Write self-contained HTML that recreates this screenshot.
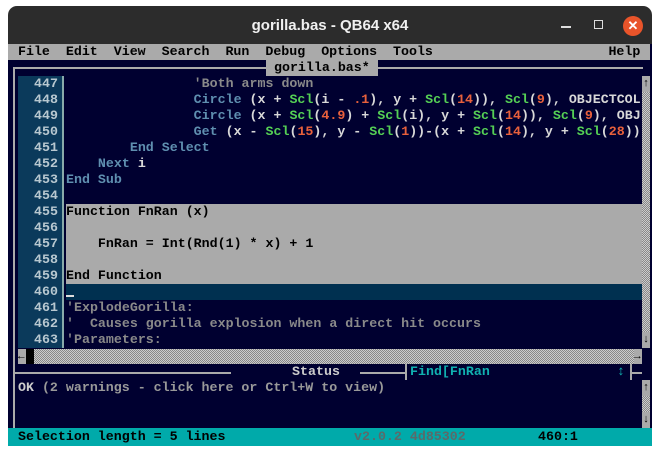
<!DOCTYPE html>
<html><head><meta charset="utf-8"><style>
*{margin:0;padding:0;box-sizing:border-box}
body{width:660px;height:455px;background:#fff;position:relative;overflow:hidden;font-family:"Liberation Mono",monospace;font-size:13.3px;line-height:16px;font-weight:bold}
.a{position:absolute;white-space:pre;overflow:hidden}
.kw{color:#5f8fb0}.id{color:#d8d8d8}.g{color:#55d055}.n{color:#e8603c}.cm{color:#8a8a8a}
</style></head><body>
<div class="a" style="left:8px;top:6px;width:644px;height:40px;background:#2c2c2c;border-radius:9px 9px 0 0"></div>
<div class="a" style="left:8px;top:17px;width:644px;text-align:center;font:bold 15px 'Liberation Sans',sans-serif;color:#f0f0f0">gorilla.bas - QB64 x64</div>
<div class="a" style="left:561px;top:26px;width:10px;height:2px;background:#ddd"></div>
<div class="a" style="left:594px;top:20px;width:9px;height:9px;border:1.5px solid #ddd"></div>
<div class="a" style="left:623px;top:16px;width:20px;height:20px;border-radius:50%;background:#e9542a;color:#fff;font:bold 13px 'Liberation Sans',sans-serif;text-align:center;line-height:20px">✕</div>
<div class="a" style="left:8px;top:44px;width:644px;height:402px;background:#000030"></div>
<div class="a" style="left:10px;top:44px;width:642px;height:16px;background:#aaa;color:#000;margin-left:-2px;padding-left:2px"> File  Edit  View  Search  Run  Debug  Options  Tools                      Help</div>
<!-- frame -->
<div class="a" style="left:13px;top:67px;width:630px;height:2px;background:#aaa"></div>
<div class="a" style="left:13px;top:67px;width:2px;height:300px;background:#aaa"></div>
<div class="a" style="left:266px;top:60px;width:112px;height:16px;background:#aaa;color:#000"> gorilla.bas*</div>
<div class="a" style="left:18px;top:76px;width:44px;height:272px;background:#0b3a5b"></div>
<div class="a" style="left:62px;top:76px;width:2px;height:272px;background:#8aa"></div>
<div class="a" style="left:66px;top:204px;width:576px;height:80px;background:#aaa"></div>
<div class="a" style="left:66px;top:284px;width:576px;height:16px;background:#003050"></div>
<div class="a" style="left:66px;top:295px;width:8px;height:2px;background:#ddd"></div>
<div class="a" style="left:18px;top:76px;width:40px;text-align:right;color:#b8c8d0">447
448
449
450
451
452
453
454
455
456
457
458
459
460
461
462
463</div>
<div class="a" style="left:66px;top:76px;width:576px;height:272px"><span class="cm">                'Both arms down</span>
<span class="kw">                Circle</span><span class="id"> (x + </span><span class="g">Scl</span><span class="id">(i - </span><span class="n">.1</span><span class="id">), y + </span><span class="g">Scl</span><span class="id">(</span><span class="n">14</span><span class="id">)), </span><span class="g">Scl</span><span class="id">(</span><span class="n">9</span><span class="id">), OBJECTCOL</span>
<span class="kw">                Circle</span><span class="id"> (x + </span><span class="g">Scl</span><span class="id">(</span><span class="n">4.9</span><span class="id">) + </span><span class="g">Scl</span><span class="id">(i), y + </span><span class="g">Scl</span><span class="id">(</span><span class="n">14</span><span class="id">)), </span><span class="g">Scl</span><span class="id">(</span><span class="n">9</span><span class="id">), OBJ</span>
<span class="kw">                Get</span><span class="id"> (x - </span><span class="g">Scl</span><span class="id">(</span><span class="n">15</span><span class="id">), y - </span><span class="g">Scl</span><span class="id">(</span><span class="n">1</span><span class="id">))-(x + </span><span class="g">Scl</span><span class="id">(</span><span class="n">14</span><span class="id">), y + </span><span class="g">Scl</span><span class="id">(</span><span class="n">28</span><span class="id">))</span>
<span class="kw">        End Select</span>
<span class="kw">    Next</span><span class="id"> i</span>
<span class="kw">End Sub</span>

<span style="color:#000">Function FnRan (x)

    FnRan = Int(Rnd(1) * x) + 1

End Function</span>

<span class="cm">'ExplodeGorilla:
'  Causes gorilla explosion when a direct hit occurs
'Parameters:</span></div>
<!-- vertical scrollbar -->
<div class="a" style="left:642px;top:76px;width:8px;height:272px;background:repeating-conic-gradient(#888 0 25%,#ccc 0 50%) 0 0/2px 2px"></div>
<div class="a" style="left:642px;top:76px;width:8px;height:16px;background:#aaa;color:#000;font-size:11px;text-align:center">↑</div>
<div class="a" style="left:642px;top:332px;width:8px;height:16px;background:#aaa;color:#000;font-size:11px;text-align:center">↓</div>
<!-- horizontal scrollbar -->
<div class="a" style="left:18px;top:349px;width:624px;height:15px;background:repeating-conic-gradient(#888 0 25%,#ccc 0 50%) 0 0/2px 2px"></div>
<div class="a" style="left:18px;top:349px;width:8px;height:15px;background:#aaa;color:#000;font-size:11px">←</div>
<div class="a" style="left:26px;top:349px;width:8px;height:15px;background:#000"></div>
<div class="a" style="left:634px;top:349px;width:8px;height:15px;background:#aaa;color:#000;font-size:11px">→</div>
<!-- status line -->
<div class="a" style="left:13px;top:372px;width:218px;height:2px;background:#aaa"></div>
<div class="a" style="left:236px;top:364px;width:160px;color:#ccc;text-align:center">Status</div>
<div class="a" style="left:360px;top:372px;width:45px;height:2px;background:#aaa"></div>
<div class="a" style="left:405px;top:364px;width:2px;height:16px;background:#aaa"></div>
<div class="a" style="left:410px;top:364px;color:#10b0b0">Find[FnRan</div>
<div class="a" style="left:617px;top:364px;color:#10b0b0">↕</div>
<div class="a" style="left:630px;top:364px;width:2px;height:16px;background:#aaa"></div>
<div class="a" style="left:632px;top:372px;width:10px;height:2px;background:#aaa"></div>
<div class="a" style="left:13px;top:366px;width:2px;height:62px;background:#aaa"></div>
<div class="a" style="left:642px;top:380px;width:8px;height:48px;background:repeating-conic-gradient(#888 0 25%,#ccc 0 50%) 0 0/2px 2px"></div>
<div class="a" style="left:642px;top:380px;width:8px;height:16px;background:#aaa;color:#000;font-size:11px;text-align:center">↑</div>
<div class="a" style="left:642px;top:412px;width:8px;height:16px;background:#aaa;color:#000;font-size:11px;text-align:center">↓</div>
<div class="a" style="left:18px;top:380px;color:#999"><span style="color:#ccc">OK</span> (2 warnings - click here or Ctrl+W to view)</div>
<!-- status bar -->
<div class="a" style="left:8px;top:428px;width:644px;height:18px;background:#00aaaa"></div>
<div class="a" style="left:18px;top:429px;color:#000">Selection length = 5 lines</div>
<div class="a" style="left:354px;top:429px;color:#5a6a6a">v2.0.2 4d85302</div>
<div class="a" style="left:538px;top:429px;color:#000">460:1</div>
</body></html>
